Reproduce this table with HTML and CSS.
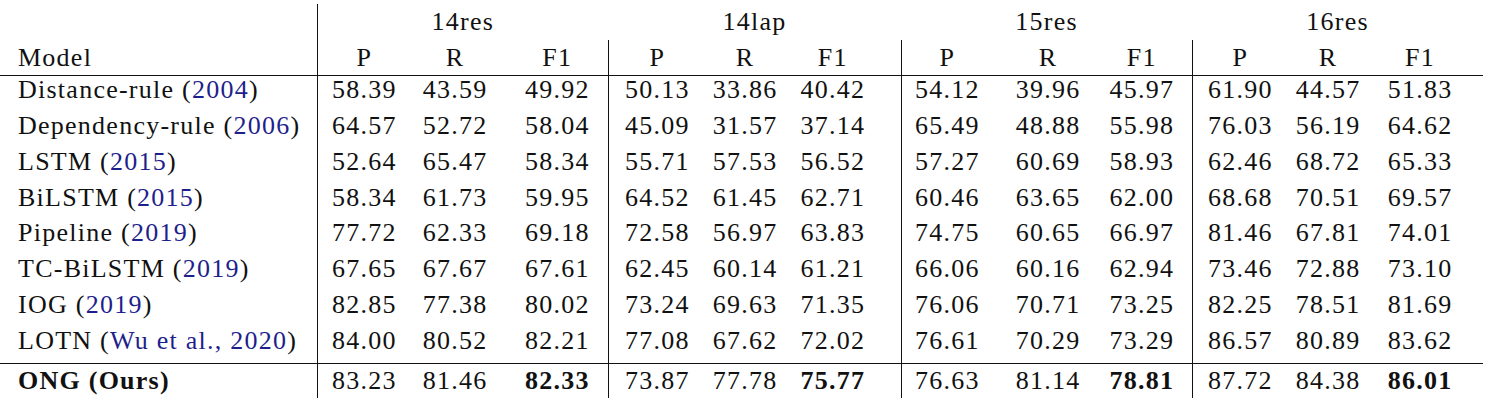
FILE: index.html
```html
<!DOCTYPE html>
<html lang="en">
  <head>
    <meta charset="UTF-8" />
    <meta name="viewport" content="width=device-width, initial-scale=1.0" />
    <title>Results table</title>

    <link rel="stylesheet" href="styles.css">
  </head>
  <body>
    <table class="results">
      <colgroup>
        <col class="col-model">
        <col style="width: 94px"><col style="width: 88px"><col style="width: 109px">
        <col style="width: 98px"><col style="width: 78px"><col style="width: 117px">
        <col style="width: 92px"><col style="width: 110px"><col style="width: 89px">
        <col style="width: 96px"><col style="width: 80px"><col style="width: 115px">
      </colgroup>
      <thead>
        <tr class="results__groups">
          <th></th>
          <th colspan="3">14res</th>
          <th colspan="3">14lap</th>
          <th colspan="3">15res</th>
          <th colspan="3">16res</th>
        </tr>
        <tr class="results__metrics">
          <th>Model</th>
          <th>P</th><th>R</th><th>F1</th>
          <th>P</th><th>R</th><th>F1</th>
          <th>P</th><th>R</th><th>F1</th>
          <th>P</th><th>R</th><th>F1</th>
        </tr>
      </thead>
      <tbody>
        <tr>
          <td>Distance-rule (<span class="cite">2004</span>)</td>
          <td>58.39</td><td>43.59</td><td>49.92</td>
          <td>50.13</td><td>33.86</td><td>40.42</td>
          <td>54.12</td><td>39.96</td><td>45.97</td>
          <td>61.90</td><td>44.57</td><td>51.83</td>
        </tr>
        <tr>
          <td>Dependency-rule (<span class="cite">2006</span>)</td>
          <td>64.57</td><td>52.72</td><td>58.04</td>
          <td>45.09</td><td>31.57</td><td>37.14</td>
          <td>65.49</td><td>48.88</td><td>55.98</td>
          <td>76.03</td><td>56.19</td><td>64.62</td>
        </tr>
        <tr>
          <td>LSTM (<span class="cite">2015</span>)</td>
          <td>52.64</td><td>65.47</td><td>58.34</td>
          <td>55.71</td><td>57.53</td><td>56.52</td>
          <td>57.27</td><td>60.69</td><td>58.93</td>
          <td>62.46</td><td>68.72</td><td>65.33</td>
        </tr>
        <tr>
          <td>BiLSTM (<span class="cite">2015</span>)</td>
          <td>58.34</td><td>61.73</td><td>59.95</td>
          <td>64.52</td><td>61.45</td><td>62.71</td>
          <td>60.46</td><td>63.65</td><td>62.00</td>
          <td>68.68</td><td>70.51</td><td>69.57</td>
        </tr>
        <tr>
          <td>Pipeline (<span class="cite">2019</span>)</td>
          <td>77.72</td><td>62.33</td><td>69.18</td>
          <td>72.58</td><td>56.97</td><td>63.83</td>
          <td>74.75</td><td>60.65</td><td>66.97</td>
          <td>81.46</td><td>67.81</td><td>74.01</td>
        </tr>
        <tr>
          <td>TC-BiLSTM (<span class="cite">2019</span>)</td>
          <td>67.65</td><td>67.67</td><td>67.61</td>
          <td>62.45</td><td>60.14</td><td>61.21</td>
          <td>66.06</td><td>60.16</td><td>62.94</td>
          <td>73.46</td><td>72.88</td><td>73.10</td>
        </tr>
        <tr>
          <td>IOG (<span class="cite">2019</span>)</td>
          <td>82.85</td><td>77.38</td><td>80.02</td>
          <td>73.24</td><td>69.63</td><td>71.35</td>
          <td>76.06</td><td>70.71</td><td>73.25</td>
          <td>82.25</td><td>78.51</td><td>81.69</td>
        </tr>
        <tr>
          <td>LOTN (<span class="cite">Wu et al., 2020</span>)</td>
          <td>84.00</td><td>80.52</td><td>82.21</td>
          <td>77.08</td><td>67.62</td><td>72.02</td>
          <td>76.61</td><td>70.29</td><td>73.29</td>
          <td>86.57</td><td>80.89</td><td>83.62</td>
        </tr>
        <tr class="results__ours">
          <td><b>ONG (Ours)</b></td>
          <td>83.23</td><td>81.46</td><td><b>82.33</b></td>
          <td>73.87</td><td>77.78</td><td><b>75.77</b></td>
          <td>76.63</td><td>81.14</td><td><b>78.81</b></td>
          <td>87.72</td><td>84.38</td><td><b>86.01</b></td>
        </tr>
      </tbody>
    </table>
  </body>
</html>
```

FILE: styles.css
```css
body {
  background-color: #fff;
  margin: 0;
  padding-top: 4px;
}

.results {
  border-collapse: collapse;
  color: #111;
  font: 26px/28px "Liberation Serif", "Times New Roman", serif;
  letter-spacing: 1.25px;
  table-layout: fixed;
  width: 1483px;
}

.col-model {
  width: 317px;
}

.results th,
.results td {
  font-weight: normal;
  padding: 0;
  text-align: center;
  white-space: nowrap;
}

.results b {
  font-weight: bold;
}

/* first column: model names */
.results th:first-child,
.results td:first-child {
  padding-left: 18px;
  text-align: left;
}

.results__groups th {
  padding-bottom: 4.4px;
  padding-top: 3.6px;
}

.results__groups th:nth-child(2) {
  border-left: 1.5px solid #111;
}

.results__metrics th {
  border-bottom: 1.5px solid #111;
  padding-bottom: 3.4px;
  padding-top: 3.6px;
}

.results tbody td {
  padding-bottom: 7.86px;
  padding-top: 0;
}

/* group separators */
.results__metrics th:nth-child(2),
.results__metrics th:nth-child(5),
.results__metrics th:nth-child(8),
.results__metrics th:nth-child(11),
.results tbody td:nth-child(2),
.results tbody td:nth-child(5),
.results tbody td:nth-child(8),
.results tbody td:nth-child(11) {
  border-left: 1.5px solid #111;
}

/* nudge the F1 columns onto their centres */
.results__metrics th:nth-child(4),
.results tbody td:nth-child(4) {
  padding-left: 8px;
}

.results__metrics th:nth-child(7),
.results tbody td:nth-child(7) {
  padding-right: 19px;
}

.results__metrics th:nth-child(10),
.results tbody td:nth-child(10),
.results__metrics th:nth-child(13),
.results tbody td:nth-child(13) {
  padding-right: 11px;
}

.results tbody .results__ours td {
  border-top: 1.5px solid #111;
  padding-bottom: 3px;
  padding-top: 3.3px;
}

.cite {
  color: #1f1f8c;
}
```
